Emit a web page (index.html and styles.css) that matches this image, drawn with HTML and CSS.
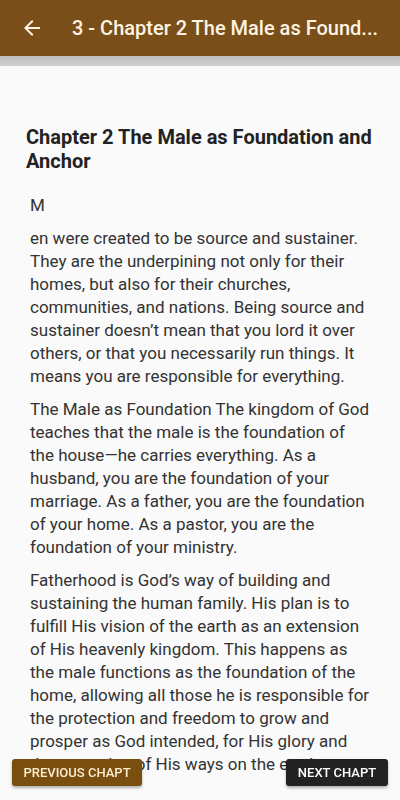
FILE: index.html
```html
<!DOCTYPE html>
<html lang="en">
  <head>
    <meta charset="UTF-8" />
    <meta name="viewport" content="width=device-width, initial-scale=1.0" />
    <title>Chapter</title>
    <link rel="stylesheet" href="styles.css">
  </head>
  <body>

    <header class="appbar">
        <svg class="back" viewBox="0 0 24 24" width="24" height="24">
            <path d="M20 11H7.83l5.59-5.59L12 4l-8 8 8 8 1.41-1.41L7.83 13H20v-2z" fill="currentColor"/>
        </svg>
        <h1 class="title">3 - Chapter 2 The Male as Found...</h1>
    </header>
    <div class="shade"></div>

    <main class="card">
        <h2 class="chapter-title">Chapter 2 The Male as Foundation and Anchor</h2>
        <div class="chapter-body">
            <p>M</p>
            <p>en were created to be source and sustainer. They are the underpining not only for their homes, but also for their churches, communities, and nations. Being source and sustainer doesn’t mean that you lord it over others, or that you necessarily run things. It means you are responsible for everything.</p>
            <p>The Male as Foundation The kingdom of God teaches that the male is the foundation of the house—he carries everything. As a husband, you are the foundation of your marriage. As a father, you are the foundation of your home. As a pastor, you are the foundation of your ministry.</p>
            <p>Fatherhood is God’s way of building and sustaining the human family. His plan is to fulfill His vision of the earth as an extension of His heavenly kingdom. This happens as the male functions as the foundation of the home, allowing all those he is responsible for the protection and freedom to grow and prosper as God intended, for His glory and the extension of His ways on the earth.</p>
        </div>
    </main>

    <!-- chapter nav -->
    <button class="nav-btn prev">PREVIOUS CHAPT</button>
    <button class="nav-btn next">NEXT CHAPT</button>

  </body>
</html>
```

FILE: styles.css
```css
*{
    padding: 0px;
    margin: 0px;
    box-sizing: border-box;
}
body{
    background-color: #fafafa;
    font-family: Roboto, "Liberation Sans", sans-serif;
    overflow: hidden;
    height: 800px;
}
.appbar{
    height: 56px;
    background-color: #7a4e18;
    color: #fdf4e3;
    display: flex;
    align-items: center;
    padding-left: 20px;
}
.back{
    flex-shrink: 0;
}
.title{
    font-size: 20px;
    font-weight: 500;
    margin-left: 28px;
    white-space: nowrap;
    overflow: hidden;
}
.shade{
    height: 10px;
    background: linear-gradient(#bdbdbd, #d0d0d0);
}
.card{
    background-color: #fafafa;
    border-radius: 4px;
    padding: 59px 26px 0px 26px;
}
.chapter-title{
    font-size: 20px;
    font-weight: 700;
    line-height: 24px;
    color: #222;
    margin-bottom: 21px;
}
.chapter-body{
    padding: 0px 4px;
}
.chapter-body p{
    font-size: 17px;
    line-height: 23px;
    color: #333;
    margin-bottom: 10px;
}
.nav-btn{
    position: fixed;
    bottom: 14px;
    height: 27px;
    border: none;
    border-radius: 3px;
    font-family: Roboto, "Liberation Sans", sans-serif;
    font-size: 13px;
    font-weight: 500;
    padding: 0px;
    white-space: nowrap;
    box-shadow: 0px 2px 3px rgba(0, 0, 0, 0.3);
}
.prev{
    left: 12px;
    width: 130px;
    background-color: #7a4e0f;
    color: #fbeed3;
}
.next{
    right: 12px;
    width: 102px;
    background-color: #222;
    color: #fff;
}
```
